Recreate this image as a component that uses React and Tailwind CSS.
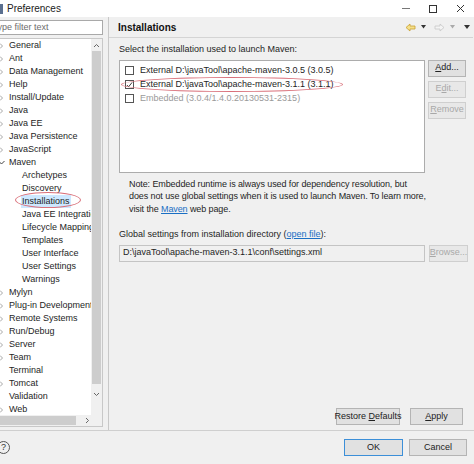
const tree = [
  { label: "General", arrow: "c" },
  { label: "Ant", arrow: "c" },
  { label: "Data Management", arrow: "c" },
  { label: "Help", arrow: "c" },
  { label: "Install/Update", arrow: "c" },
  { label: "Java", arrow: "c" },
  { label: "Java EE", arrow: "c" },
  { label: "Java Persistence", arrow: "c" },
  { label: "JavaScript", arrow: "c" },
  { label: "Maven", arrow: "e" },
  { label: "Archetypes", child: true },
  { label: "Discovery", child: true },
  { label: "Installations", child: true, selected: true },
  { label: "Java EE Integration", child: true },
  { label: "Lifecycle Mapping", child: true },
  { label: "Templates", child: true },
  { label: "User Interface", child: true },
  { label: "User Settings", child: true },
  { label: "Warnings", child: true },
  { label: "Mylyn", arrow: "c" },
  { label: "Plug-in Development", arrow: "c" },
  { label: "Remote Systems", arrow: "c" },
  { label: "Run/Debug", arrow: "c" },
  { label: "Server", arrow: "c" },
  { label: "Team", arrow: "c" },
  { label: "Terminal" },
  { label: "Tomcat", arrow: "c" },
  { label: "Validation" },
  { label: "Web", arrow: "c" },
];

const Btn = ({ children, disabled, primary, className = "" }) => (
  <div
    className={
      "flex h-[17px] shrink-0 items-center justify-center whitespace-nowrap border text-[9px] " +
      (disabled
        ? "border-[#cfcfcf] bg-[#e8e8e8] text-[#a8a8a8] "
        : primary
        ? "border-[#3c8fd8] bg-[#e1e1e1] text-[#222] "
        : "border-[#b4b4b4] bg-[#e1e1e1] text-[#222] ") +
      className
    }
  >
    {children}
  </div>
);

const Check = ({ checked }) => (
  <span className="flex h-[9px] w-[9px] shrink-0 items-center justify-center border border-[#555] bg-white">
    {checked && (
      <svg width="8" height="8" viewBox="0 0 8 8">
        <path d="M1 4l2 2 4-5" fill="none" stroke="#333" strokeWidth="1.1" />
      </svg>
    )}
  </span>
);

export default function App() {
  return (
    <div className="flex h-[464px] w-[474px] flex-col overflow-hidden bg-[#f0f0f0] font-['Liberation_Sans',sans-serif] text-[9px] text-[#1e1e1e]">
      {/* title bar */}
      <div className="flex h-[17px] shrink-0 items-center bg-white">
        <div className="ml-[-4px] h-[10px] w-[7px] bg-[#5a6f8f]" />
        <span className="ml-[4px] text-[10px] text-[#222]">Preferences</span>
        <div className="ml-auto flex items-center gap-[19px] pr-[9px] text-[#333]">
          <span className="h-px w-[8px] bg-[#777]" />
          <span className="h-[8px] w-[8px] border border-[#333]" />
          <svg width="9" height="9" viewBox="0 0 9 9">
            <path d="M1 1l7 7M8 1L1 8" stroke="#333" strokeWidth="1" />
          </svg>
        </div>
      </div>

      <div className="flex min-h-0 flex-1">
        {/* left pane */}
        <div className="flex w-[103px] shrink-0 flex-col overflow-hidden pt-[3px]">
          <div className="flex h-[15px] items-center border border-[#a9a9a9] border-l-0 bg-white">
            <span className="ml-[-5px] text-[#6d6d6d]">type filter text</span>
          </div>
          <div className="mt-[3px] flex h-[389px] flex-col border border-l-0 border-[#c8c8c8] bg-white">
            <div className="flex min-h-0 flex-1">
              <div className="flex-1 overflow-hidden">
                {tree.map((t) => (
                  <div key={t.label} className="flex h-[13px] items-center whitespace-nowrap">
                    <span className="flex w-[9px] shrink-0 items-center justify-center text-[#999]">
                      {t.arrow === "c" && (
                        <svg width="5" height="6" viewBox="0 0 5 6" className="ml-[-6px]">
                          <path d="M1 0.5l2.5 2.5L1 5.5" fill="none" stroke="#a6a6a6" strokeWidth="1" />
                        </svg>
                      )}
                      {t.arrow === "e" && (
                        <svg width="6" height="6" viewBox="0 0 6 6" className="ml-[-6px]">
                          <path d="M0.5 2l2 2 3-3" fill="none" stroke="#444" strokeWidth="1" />
                        </svg>
                      )}
                    </span>
                    {t.child ? (
                      <span
                        className={
                          "relative ml-[12px] px-px " + (t.selected ? "bg-[#cde8ff] text-[#1e1e1e]" : "")
                        }
                      >
                        {t.label}
                        {t.selected && (
                          <span className="absolute left-[-6px] top-[-3px] h-[16px] w-[66px] rounded-[50%] border border-[#d9707a]" />
                        )}
                      </span>
                    ) : (
                      <span>{t.label}</span>
                    )}
                  </div>
                ))}
              </div>
              {/* vertical scrollbar */}
              <div className="flex w-[11px] shrink-0 flex-col items-center bg-[#f0f0f0]">
                <svg width="7" height="8" viewBox="0 0 7 8" className="mt-[3px]">
                  <path d="M1 5l2.5-2.5L6 5" fill="none" stroke="#666" strokeWidth="1" />
                </svg>
                <div className="mt-[1px] h-[333px] w-[9px] bg-[#cdcdcd]" />
                <svg width="7" height="8" viewBox="0 0 7 8" className="mt-[6px]">
                  <path d="M1 3l2.5 2.5L6 3" fill="none" stroke="#666" strokeWidth="1" />
                </svg>
              </div>
            </div>
            {/* horizontal scrollbar */}
            <div className="flex h-[11px] shrink-0 items-center bg-[#f0f0f0]">
              <div className="h-[9px] w-[76px] bg-[#cdcdcd]" />
              <svg width="8" height="7" viewBox="0 0 8 7" className="ml-[7px]">
                <path d="M3 1l2.5 2.5L3 6" fill="none" stroke="#666" strokeWidth="1" />
              </svg>
            </div>
          </div>
        </div>

        {/* right pane */}
        <div className="ml-[5px] mr-[2px] flex flex-1 flex-col border-l border-[#c8c8c8] pb-[2px]">
          <div className="flex h-[21px] shrink-0 items-center border-b border-[#d4d4d4] pl-[9px] pr-[3px]">
            <span className="text-[10px] font-bold text-[#111]">Installations</span>
            <div className="ml-auto flex items-center gap-[5px]">
              <svg width="11" height="9" viewBox="0 0 11 9">
                <path d="M1 4.5L5 1v2h5v3H5v2z" fill="#f5e08a" stroke="#c8a030" strokeWidth="0.8" />
              </svg>
              <svg width="5" height="4" viewBox="0 0 5 4">
                <path d="M0 0h5L2.5 3.5z" fill="#333" />
              </svg>
              <svg width="11" height="9" viewBox="0 0 11 9" className="ml-[3px]">
                <path d="M10 4.5L6 1v2H1v3h5v2z" fill="#f4f4f4" stroke="#c6c6c6" strokeWidth="0.8" />
              </svg>
              <svg width="5" height="4" viewBox="0 0 5 4">
                <path d="M0 0h5L2.5 3.5z" fill="#aaa" />
              </svg>
              <svg width="6" height="4" viewBox="0 0 6 4" className="ml-[4px]">
                <path d="M0 0h6L3 4z" fill="#333" />
              </svg>
            </div>
          </div>

          <div className="flex flex-1 flex-col pl-[10px] pr-[5px]">
            <div className="mt-[5px]">Select the installation used to launch Maven:</div>
            <div className="mt-[3px] flex">
              <div className="h-[113px] w-[306px] border border-[#acacac] bg-white pl-[5px] pt-[3px]">
                <div className="flex h-[14px] items-center gap-[6px]">
                  <Check />
                  <span>External D:\javaTool\apache-maven-3.0.5 (3.0.5)</span>
                </div>
                <div className="relative flex h-[14px] items-center gap-[6px]">
                  <Check checked />
                  <span>External D:\javaTool\apache-maven-3.1.1 (3.1.1)</span>
                  <span className="absolute left-[-4px] top-[-1px] h-[15px] w-[222px] rounded-[50%] border border-[#d9707a]" />
                </div>
                <div className="flex h-[14px] items-center gap-[6px] text-[#9a9a9a]">
                  <Check />
                  <span>Embedded (3.0.4/1.4.0.20130531-2315)</span>
                </div>
              </div>
              <div className="ml-[3px] flex flex-col gap-[4px]">
                <Btn className="w-[38px]">
                  <span><span className="underline">A</span>dd...</span>
                </Btn>
                <Btn disabled className="w-[38px]">
                  <span>E<span className="underline">d</span>it...</span>
                </Btn>
                <Btn disabled className="w-[38px]">
                  <span><span className="underline">R</span>emove</span>
                </Btn>
              </div>
            </div>

            <div className="mt-[5px] pl-[10px] leading-[12.5px] tracking-[-0.1px]">
              Note: Embedded runtime is always used for dependency resolution, but
              <br />
              does not use global settings when it is used to launch Maven. To learn more,
              <br />
              visit the <span className="text-[#1a6fc4] underline">Maven</span> web page.
            </div>

            <div className="mt-[13px]">
              Global settings from installation directory (
              <span className="text-[#1a6fc4] underline">open file</span>):
            </div>
            <div className="mt-[3px] flex items-center">
              <div className="flex h-[17px] w-[306px] items-center border border-[#c4c4c4] bg-[#f0f0f0] pl-[3px]">
                D:\javaTool\apache-maven-3.1.1\conf\settings.xml
              </div>
              <Btn disabled className="ml-[4px] w-[39px]">
                <span><span className="underline">B</span>rowse...</span>
              </Btn>
            </div>

            <div className="mt-auto mb-[3px] flex justify-end gap-[10px] pr-[5px]">
              <Btn className="w-[64px]">
                <span>Restore <span className="underline">D</span>efaults</span>
              </Btn>
              <Btn className="w-[53px]">
                <span><span className="underline">A</span>pply</span>
              </Btn>
            </div>
          </div>
        </div>
      </div>

      {/* bottom bar */}
      <div className="flex h-[34px] shrink-0 items-center border-t border-[#cfcfcf]">
        <span className="ml-[-3px] flex h-[13px] w-[13px] items-center justify-center rounded-full border border-[#555] text-[9px] leading-none text-[#333]">
          ?
        </span>
        <div className="ml-auto flex gap-[6px] pr-[7px]">
          <Btn primary className="w-[59px]">OK</Btn>
          <Btn className="w-[58px]">Cancel</Btn>
        </div>
      </div>
    </div>
  );
}
